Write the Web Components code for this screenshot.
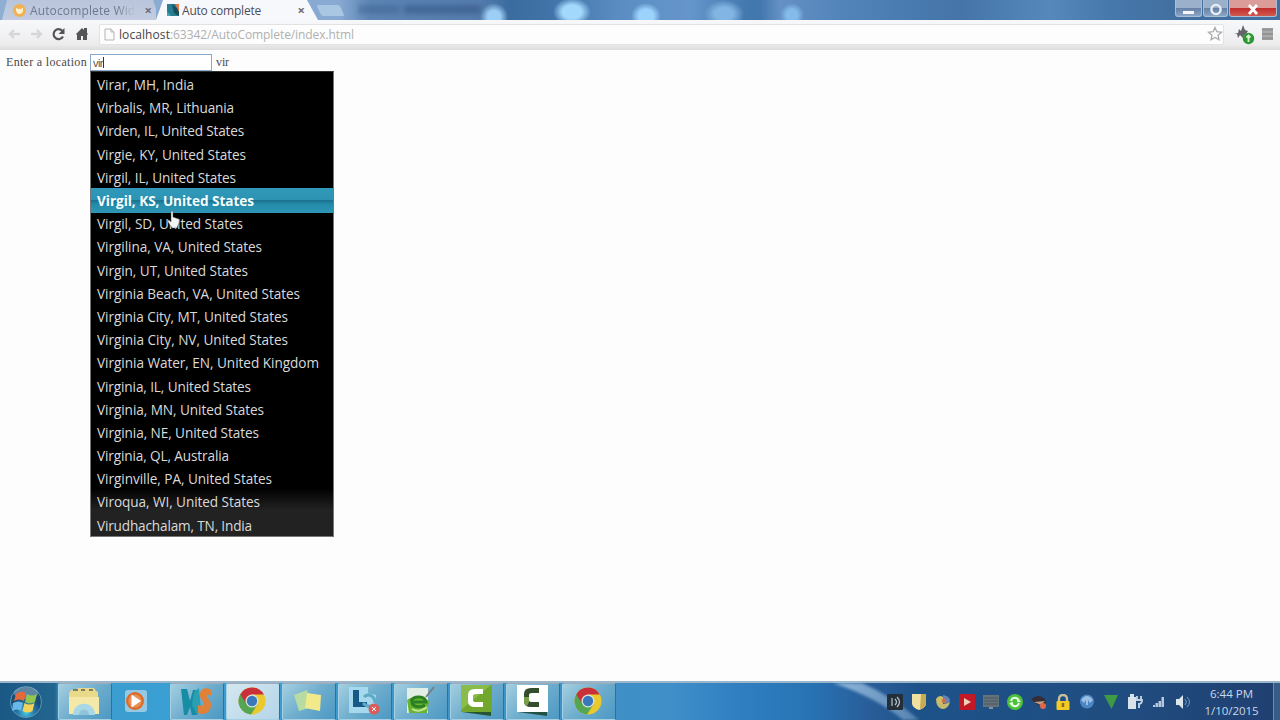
<!DOCTYPE html>
<html lang="en">
<head>
<meta charset="utf-8">
<title>Auto complete</title>
<style>
html,body{margin:0;height:100%;overflow:hidden;background:#fdfdfd}
</style>
</head>
<body>
<desktop-screen></desktop-screen>
<script>
const make = (name, html, setup) => customElements.define(name, class extends HTMLElement {
  connectedCallback() {
    if (this.shadowRoot) return;
    const root = this.attachShadow({mode: 'open'});
    root.innerHTML = typeof html === 'function' ? html(this) : html;
    if (setup) setup(this, root);
  }
});

/* A single line of text set to a given width through its tracking. */
make('fit-text', '<style>:host{display:inline-block;white-space:nowrap}span{display:inline-block}</style><span></span>', (el, root) => {
  const span = root.querySelector('span');
  span.textContent = el.getAttribute('text');
  const want = +el.getAttribute('w');
  const have = span.getBoundingClientRect().width;
  if (have) span.style.letterSpacing = ((want - have) / span.textContent.length) + 'px';
});

const chrome = `<circle cx="14" cy="14" r="13.5" fill="#e9c92c"/><path d="M2.3 7.2A13.5 13.5 0 0 0 13 27.5L19.6 17.3 14 14z" fill="#55a653"/><path d="M14 7.5h11.8a13.5 13.5 0 0 0-23.5-.3L8 16.5z" fill="#c9303a"/><circle cx="14" cy="14" r="6.5" fill="#dfe6dc"/><circle cx="14" cy="14" r="5.2" fill="#3a78bd"/>`;
const icons = {
  folder: [32, 28, `<path d="M1 6 3 3h5l2-2h16l2 3 2 1v22H1z" fill="#e9d98b"/><path d="M1 10h30v17H1z" fill="#f4e9a8"/><path d="M5 3h5M13 3h4M21 3h4" stroke="#7f805e" stroke-width="2"/><path d="M5 28c0-15 22-15 22 0z" fill="#a8d7e6"/><path d="M11 28c0-7 10-7 10 0z" fill="#8fc4da"/>`],
  player: [24, 24, `<rect x="0" y="1" width="22" height="22" rx="3" fill="#b4d6e8" opacity=".75"/><circle cx="10" cy="12" r="9" fill="#dc6c2d"/><circle cx="10" cy="12" r="6.6" fill="#eb9053"/><path d="M6.5 5.5 16 12l-9.5 6.5z" fill="#fff"/>`],
  ws: [32, 28, `<path d="M1 2h6l3 12 3-11h5l-1 25h-5l-2-8-3 8H4z" fill="#178ca5"/><path d="m14 5 5-4 2 22-4 5-5-10z" fill="#2a9fb2"/><path d="M31 3c-5-4-12-1-11 6 1 5 5 5 4 8-1 2-4 2-6 1v8c7 3 13-1 13-8 0-6-5-7-4-9 1-2 3-1 4 0z" fill="#df8138"/>`],
  chrome: [28, 28, chrome],
  note: [30, 24, `<path d="m1 6 13-5 5 17-13 4z" fill="#b6dca3"/><path d="m14 4 14 2-1 16-15-3z" fill="#f2e98b"/>`],
  lync: [32, 28, `<path d="M1 0h19v6l8 2-2 18H1z" fill="#a6d9ed"/><path d="M5 3h6v12h8v5H5z" fill="#155986"/><path d="M16 10c5-5 11 0 11 6m-12 0c4 4 8 4 11 2" stroke="#5dabc9" stroke-width="3" fill="none"/><circle cx="26" cy="22" r="5.5" fill="#dc5c59"/><path d="m24 20 4 4m0-4-4 4" stroke="#fff"/>`],
  note2: [32, 30, `<path d="M3 2h21v25H3z" fill="#e5eee6"/><path d="M3 14c7-5 16-4 22 1l-2 12H5z" fill="#69b62c"/><path d="M7 15c3-6 14-5 15 1H8c0 5 8 6 13 3" stroke="#2b7f25" stroke-width="3" fill="none"/><path d="M8 23c5 3 11 2 15-2" stroke="#c3e69a" stroke-width="2" fill="none"/><path d="m22 11 8-10" stroke="#767f7d" stroke-width="2"/>`],
  camG: [32, 31, `<path d="M1 0h31v27H1z" fill="#72a72e"/><path d="M1 0h30L1 25z" fill="#8abc4c"/><path d="M2 27h29v4z" fill="#235631"/><path d="M23 4h-8q-7 0-7 6v6q0 6 7 6h8v-5h-7q-3 0-3-2v-4q0-2 3-2h7z" fill="#fff"/>`],
  camW: [32, 31, `<path d="M1 0h31v27H1z" fill="#fff"/><path d="M2 27h29v4z" fill="#235144"/><path d="M23 3h-8q-7 0-7 6v7q0 6 7 6h8v-5h-7q-3 0-3-2v-5q0-2 3-2h7z" fill="#334d2d"/><path d="M8 12h5v5l-2 4q-3-1-3-5z" fill="#79a04c"/>`],
  start: [34, 34, `<defs><radialGradient id="o" cy=".85"><stop stop-color="#44c8e6"/><stop offset=".5" stop-color="#287dac"/><stop offset="1" stop-color="#174e76"/></radialGradient></defs><circle cx="17" cy="17" r="15.5" fill="url(#o)" stroke="#5f96b7"/><ellipse cx="17" cy="8" rx="12" ry="6" fill="#c8dbe7" opacity=".4"/><path d="M7 9q5-4 10-1l-2 8q-5-3-10 0z" fill="#e5693a"/><path d="M18 9q5 3 10 0l-2 8q-5 3-10 0z" fill="#92c650"/><path d="M4 18q6-3 10 0l-2 8q-4-3-9 0z" fill="#69b8ec"/><path d="M15.500 18q5 3 10 0l-2 8q-5 3-10 0z" fill="#f4d35b"/>`],
  audio: [16, 16, `<rect width="16" height="16" rx="1" fill="#242e38"/><path d="M5 4v8M8 5q3 3 0 6m2-8q5 5 0 10" fill="none" stroke="#b9c4ca" stroke-width="1.2"/>`],
  shield: [16, 16, `<path d="M1 0h14v10q-1 4-7 6-6-2-7-6z" fill="#f0e0a0"/><path d="M10 0h5v10q-1 4-6 5z" fill="#c8ac51"/>`],
  multi: [16, 16, `<path d="M1 5q3-5 7-2v8H4Q1 9 1 5z" fill="#cdbe67"/><path d="M8 1q6 1 7 5-1 5-7 3z" fill="#6583b8"/><path d="M1 8q7 4 14 0-2 7-7 7T1 8z" fill="#c5b96f"/><circle cx="9" cy="7" r="2.3" fill="#cd6f45"/>`],
  red: [16, 16, `<rect width="16" height="16" rx="1" fill="#c31926"/><path d="m5 4 7 4-7 4z" fill="#f1d3b9"/>`],
  keys: [16, 16, `<path d="M0 1h16v12H0z" fill="#66727b"/><path d="M1 4h14M1 7h14M1 10h14" stroke="#4a5761"/><path d="M6 13h4v2H6z" fill="#85929b"/>`],
  sync: [16, 16, `<circle cx="8" cy="8" r="8" fill="#4ec13c"/><path d="M4 7q1-4 5-3l3 2m0 3q-1 4-5 3L4 10" fill="none" stroke="#e6ffe1" stroke-width="2"/><path d="M10 3v5h4zM6 8v5L2 9z" fill="#e6ffe1"/>`],
  mask: [16, 16, `<path d="M0 5q8-6 14 0l1 5-8 1-4-3z" fill="#342d34"/><path d="m3 8 11-1-4 4z" fill="#c39a80"/><circle cx="12" cy="12" r="3" fill="#df6848"/>`],
  lock: [16, 16, `<path d="M4 8V5q0-4 4-4t4 4v3" stroke="#c9bf98" stroke-width="2.4" fill="none"/><rect x="1.500" y="7" width="13" height="9" rx="1" fill="#f2ca26"/><path d="M8 9v4" stroke="#886b18" stroke-width="2.5"/>`],
  globe: [16, 16, `<circle cx="8" cy="7.500" r="7" fill="#4b85c3"/><path d="M2 6q6-8 12 0l-3 3-2-3v5H7V6L5 9z" fill="#9bbfe4"/>`],
  tri: [16, 16, `<path d="M1 1h14L8.500 15z" fill="#3e9a43"/>`],
  power: [16, 16, `<path d="M1 3h2V0h4v3h2v12H1z" fill="#d9e2e8"/><path d="M10 2v4m4-4v4m-5 0h6q0 4-3 4v4" stroke="#c3d1dc" stroke-width="1.9" fill="none"/>`],
  signal: [16, 16, `<path d="M2 11h2v2H2zm2.500-2h2.500v4H4.500zm3-2H10v6H7.500zm3-4H13v10h-2.500z" fill="#b6c9dd"/>`],
  volume: [16, 16, `<path d="M1 5h3l4-4v14l-4-4H1z" fill="#dce6ee"/><path d="M10 5q3 3 0 6m2-8q5 5 0 10" stroke="#7899bc" fill="none"/>`],
  back: [14, 12, `<path d="M13 6H3m4-4L3 6l4 4" stroke="#d6d6d8" stroke-width="2.4" fill="none"/>`],
  fwd: [14, 12, `<path d="M1 6h10M7 2l4 4-4 4" stroke="#d6d6d8" stroke-width="2.4" fill="none"/>`],
  reload: [14, 14, `<path d="M10.500 4A5 5 0 1 0 11 9.500" stroke="#545454" stroke-width="2.2" fill="none"/><path d="M12.500 1v6h-6z" fill="#545454"/>`],
  home: [12, 13, `<path d="M0 7 6 1l2 2V1h3v5l1 1-1 1v5H7V9H5v4H1V8z" fill="#555"/>`],
  page: [11, 13, `<path d="M1 1h6l3 3v8H1zM7 1v3h3" stroke="#b5b5b5" fill="#fbfbfb"/>`],
  star: [16, 16, `<path d="m8 1.500 1.900 4.200 4.600.5-3.400 3.100.9 4.500L8 11.500l-4 2.300.9-4.500-3.400-3.100 4.600-.5z" fill="#fafafa" stroke="#aaa" stroke-width="1.300"/>`],
  ext: [22, 20, `<path d="m1 9 4-1 1-4 2 2 2-6 2 5 3 1-2 3-2 1-1 3-3-3-2 3-1-4z" fill="#67636b"/><circle cx="15.500" cy="13.500" r="5.700" fill="#2e9835"/><path d="M15.500 10v7m-2-4.500 2-2 2 2" stroke="#d8f4cf" stroke-width="1.800" fill="none"/>`],
  menu: [11, 12, `<path d="M0 0h11v12H0z" fill="#a9a9a9"/><path d="M0 1.500h11M0 6h11M0 10.500h11" stroke="#929292" stroke-width="2"/>`],
  moo: [13, 13, `<circle cx="6.500" cy="6.500" r="6.500" fill="#f0b252"/><path d="M3 4q3.500 2 7 0v3q-1 3-3.500 3T3 7z" fill="#fff0ce"/>`],
  fav: [12, 12, `<path d="M0 0h12v12H0z" fill="#277e90"/><path d="m5 0 7 6v6L7 9z" fill="#174d5c"/><path d="M8 0h4v8z" fill="#e17a4b"/><path d="M0 7l4 5H0z" fill="#43a5b2"/>`],
  hand: [14, 19, `<path d="M4 1q2-1 2 1v5l6 2q1 1 0 4l-2 5H5l-4-6q-1-2 1-2l2 2z" fill="#f3f3f3" stroke="#444" stroke-width=".5"/>`]
};
make('ui-icon', el => {
  const [w, h, body] = icons[el.getAttribute('name')];
  return `<style>:host{display:block;flex:none}svg{display:block}</style><svg width="${w}" height="${h}" viewBox="0 0 ${w} ${h}">${body}</svg>`;
});

make('browser-tab', el => `<style>
:host{display:flex;align-items:center;box-sizing:border-box;width:154px;height:20px;padding:0 4px 0 11px;font:12px "Open Sans",sans-serif;color:#6d7990;background:linear-gradient(#b9c5dc,#c3cce0);clip-path:polygon(5px 0,151px 0,158px 20px,0 20px)}
:host([active]){width:162px;padding-left:11px;padding-right:13px;color:#4d4d55;background:#f7f8fb;clip-path:polygon(7px 0,151px 0,162px 20px,0 20px)}
.t{margin-left:4px;flex:1;overflow:hidden}
:host([active]) .t{margin-left:3px}
:host(:not([active])) .t{-webkit-mask-image:linear-gradient(90deg,#000 75%,transparent 92%)}
.x{font:700 13px "Open Sans",sans-serif;color:#6b6b76}
</style><ui-icon name="${el.getAttribute('icon')}"></ui-icon><span class="t"><fit-text text="${el.getAttribute('label')}" w="${el.getAttribute('w')}"></fit-text></span><span class="x">×</span>`);

make('window-controls', `<style>:host{display:flex;height:18px;gap:1px;margin-right:3px}
div{display:grid;place-items:center;height:17px;border:1px solid #a9bdd5;border-top:0;border-radius:0 0 3px 3px;box-sizing:border-box;background:linear-gradient(#9bb0cb 50%,#647fa3 50%,#8aa5c6)}
.a{width:27px}.b{width:25px}.c{width:48px;background:linear-gradient(#db9b99 48%,#c12c2b 50%,#d05b50)}
</style><div class="a"><svg width="13" height="13"><path d="M1 9h11v3H1z" fill="#f4f6fa"/></svg></div><div class="b"><svg width="14" height="15"><circle cx="7" cy="8.500" r="4.600" fill="none" stroke="#e9eff5" stroke-width="2.400"/></svg></div><div class="c"><svg width="12" height="13"><path d="m2 3 8 9m0-9-8 9" stroke="#fff" stroke-width="2.700"/></svg></div>`);

make('title-bar', `<style>
:host{display:flex;height:20px;overflow:hidden;padding-left:2px;background:
radial-gradient(ellipse 14px 14px at 494px 17px,#9dcef5 45%,transparent),
radial-gradient(ellipse 19px 14px at 572px 12px,#a2d8fb 50%,transparent),
radial-gradient(ellipse 15px 13px at 646px 16px,#9bd3fd 50%,transparent),
radial-gradient(ellipse 20px 14px at 724px 14px,#83b5e2 45%,transparent),
radial-gradient(ellipse 12px 12px at 792px 15px,#84bbeb 45%,transparent),
linear-gradient(90deg,#8eaed2 0,#87a9d2 340px,#5d85b4 370px,#547cad 480px,#3a6c9f 510px,#4173a8 550px,#5b8dc3 620px,#6595cb 690px,#4479af 745px,#4277ae 760px,#6490c5 780px,#5284ba 840px,#4474a8 960px,#5788bb 1050px,#4778ac 1110px,#416f9f 1180px)}
.new{width:23px;height:11px;margin:5px 0 0 1px;background:#a9c7e2;transform:skewX(25deg);border-radius:2px}
.ghost{flex:1;padding:5px 0 0 16px;filter:blur(2.5px);display:flex;gap:4px}
.ghost i{height:9px;background:#3a5e8b;opacity:.45;width:42px}.ghost i+i{width:77px;opacity:.7}
</style><browser-tab icon="moo" label="Autocomplete Widg" w="112"></browser-tab><browser-tab active icon="fav" label="Auto complete" w="79"></browser-tab><div class="new"></div><div class="ghost"><i></i><i></i></div><window-controls></window-controls>`);

make('tool-bar', `<style>
:host{display:flex;align-items:center;height:30px;box-sizing:border-box;padding:0 7px 3px;background:linear-gradient(#f7f8fb,#ededee 80%,#dcdcdc)}
.nav{display:flex;align-items:center;gap:9px;width:92px}
.url{flex:1;display:flex;align-items:center;height:21px;margin-top:1px;box-sizing:border-box;border:1px solid #e2e2e3;border-radius:2px;background:#fdfdfd;padding:0 0 0 4px;margin-right:9px}
.txt{flex:1;margin-left:4px;white-space:nowrap;font:12px "Open Sans",sans-serif;color:#b0b0b0}
.host{color:#454545}
.nav ui-icon:nth-child(3){margin-left:-1px;margin-right:1px}
</style><div class="nav"><ui-icon name="back"></ui-icon><ui-icon name="fwd"></ui-icon><ui-icon name="reload"></ui-icon><ui-icon name="home"></ui-icon></div>
<div class="url"><ui-icon name="page"></ui-icon><div class="txt"><fit-text class="host" text="localhost" w="51"></fit-text><fit-text text=":63342/AutoComplete/index.html" w="184"></fit-text></div><ui-icon name="star"></ui-icon></div><ui-icon name="ext" style="margin-top:3px"></ui-icon><ui-icon name="menu" style="margin-left:7px"></ui-icon>`);

make('suggestion-item', el => `<style>
:host{display:flex;align-items:center;height:23.2px;padding-left:6px;font:13.6px "Open Sans",sans-serif;color:#dadada}
:host([selected]){color:#f4fdff;font-weight:700;background:linear-gradient(#3099b9,#2c93b3 46%,#1c728f 50%,#238baa 65%,#3096b5);height:25px;margin:-1.3px 0 -.5px}
</style><fit-text text="${el.getAttribute('label')}" w="${el.getAttribute('w')}"></fit-text>`);

const places = [['Virar, MH, India',194],['Virbalis, MR, Lithuania',234],['Virden, IL, United States',244],['Virgie, KY, United States',246],['Virgil, IL, United States',236],['Virgil, KS, United States',254],['Virgil, SD, United States',243],['Virgilina, VA, United States',262],['Virgin, UT, United States',248],['Virginia Beach, VA, United States',300],['Virginia City, MT, United States',288],['Virginia City, NV, United States',288],['Virginia Water, EN, United Kingdom',319],['Virginia, IL, United States',251],['Virginia, MN, United States',264],['Virginia, NE, United States',259],['Virginia, QL, Australia',229],['Virginville, PA, United States',272],['Viroqua, WI, United States',260],['Virudhachalam, TN, India',252]];
make('suggestion-list', `<style>
:host{display:block;box-sizing:border-box;width:244px;height:466px;padding-top:1px;border:1px solid #777;border-top-color:#333;background:linear-gradient(#000 416px,#222 438px)}
</style>${places.map((p, i) => `<suggestion-item ${i === 5 ? 'selected' : ''} label="${p[0]}" w="${p[1] - 97}"></suggestion-item>`).join('')}`);

make('location-field', `<style>
:host{display:flex;align-items:center;height:17px;font:12px "Liberation Serif",serif;color:#4a4a4a}
.lab{width:84px}
.box{position:relative;box-sizing:border-box;width:122px;height:17px;border:1px solid #8ba9cd;background:#fff;padding-left:2px;font:11px/14px "Liberation Sans",sans-serif;color:#555;display:flex;align-items:center}
.caret{width:1px;height:11px;background:#333}
suggestion-list{position:absolute;left:-1px;top:16px;z-index:1}
.echo{margin-left:4px}
ui-icon{position:absolute;left:76px;top:155px;z-index:2}
</style><span class="lab"><fit-text text="Enter a location" w="81"></fit-text></span><div class="box"><fit-text text="vir" w="10"></fit-text><span class="caret"></span><suggestion-list></suggestion-list><ui-icon name="hand"></ui-icon></div><span class="echo"><fit-text text="vir" w="13"></fit-text></span>`);

make('task-button', el => `<style>
:host{display:grid;place-items:center;box-sizing:border-box;width:54px;height:37px;padding:0 3px 2px 0;border:1px solid #a5cfe3;border-top-color:#9cabb5;border-right-color:#356f98;border-radius:2px;background:linear-gradient(135deg,#a4cfe0,#6eadcd 50%,#4c98c4)}
:host([plain]){border-color:transparent;background:none;padding-right:8px}
:host([lit]){background:linear-gradient(135deg,#d4e7f0,#b4d5e8)}
</style><ui-icon name="${el.getAttribute('icon')}"></ui-icon>`);

make('task-bar', `<style>
:host{display:flex;height:39px;box-sizing:border-box;border-top:2px solid #9bb6ca;background:linear-gradient(90deg,#1b5885 0,#22668f 55px,#3c9ccd 60px,#3a9fd3 170px,#3f91c5 560px,#408fc9 670px,#2f7fc0 740px,#2873b4 810px,#285d99 870px,#1d5289 920px,#204d80 1120px,#203f71)}
.start{width:58px;padding-left:9px;box-sizing:border-box;display:flex;align-items:center}
.buttons{display:flex;gap:2px;flex:1}
.tray{position:relative;display:flex;align-items:center;gap:8px}
.streak{position:absolute;left:-54px;top:0;filter:blur(1.5px)}
.tray ui-icon{position:relative}
.clock{width:83px;display:flex;flex-direction:column;align-items:center;justify-content:center;font:11.5px/17px "Open Sans",sans-serif;color:#cad8e8;margin-left:-1px}
.show{width:6px;border-left:1px solid #6c8aab;background:#365c88}
</style><div class="start"><ui-icon name="start"></ui-icon></div><div class="buttons">
${['folder','player','ws','chrome','note','lync','note2','camG','camW','chrome'].map((n, i) => `<task-button icon="${n}" ${i === 1 ? 'plain' : i === 3 ? 'lit' : ''}></task-button>`).join('')}</div>
<div class="tray"><svg class="streak" width="112" height="37"><defs><linearGradient id="s"><stop stop-color="#bfddf5"/><stop offset="1" stop-color="#6b96bf"/></linearGradient></defs><path d="M0 0h29q28 12 57 37H70Q45 15 0 0z" fill="url(#s)" opacity=".7"/></svg>${['audio','shield','multi','red','keys','sync','mask','lock','globe','tri','power','signal','volume'].map(n => `<ui-icon name="${n}"></ui-icon>`).join('')}</div>
<div class="clock"><fit-text text="6:44 PM" w="43"></fit-text><fit-text text="1/10/2015" w="54"></fit-text></div><div class="show"></div>`);

make('desktop-screen', `<style>:host{display:flex;flex-direction:column;width:1280px;height:720px;overflow:hidden;background:#fdfdfd}
main{flex:1;padding:4px 6px}
</style><title-bar></title-bar><tool-bar></tool-bar><main><location-field></location-field></main><task-bar></task-bar>`);
</script>
</body>
</html>
